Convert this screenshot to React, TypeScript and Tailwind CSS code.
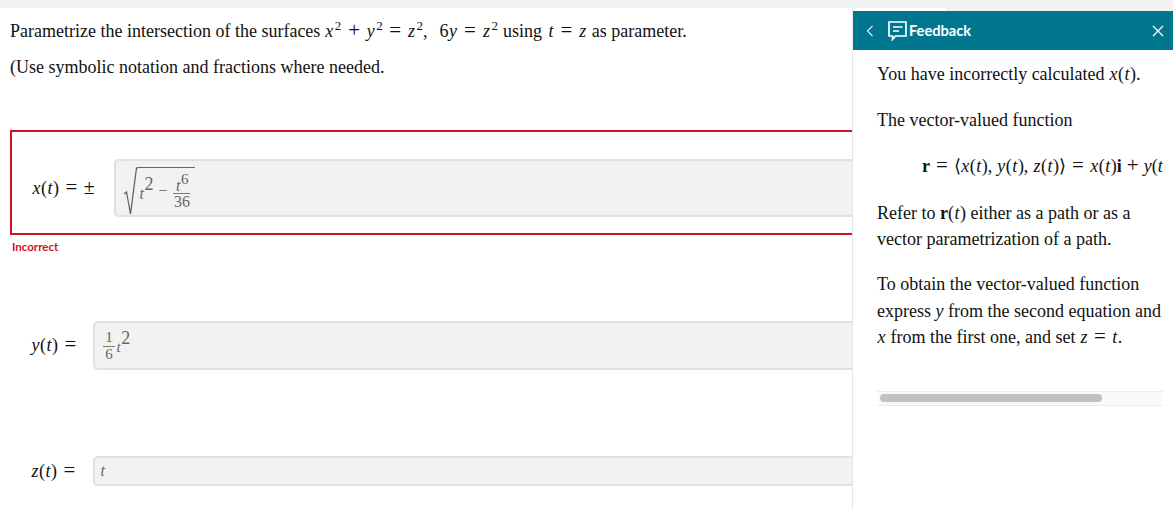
import React from "react";

const I = ({ children }: { children: React.ReactNode }) => <i className="italic px-[0.5px]">{children}</i>;
const Sup = ({ children }: { children: React.ReactNode }) => (
  <sup className="text-[13px] leading-none align-baseline relative top-[-7px] pl-[1px]">{children}</sup>
);
const Eq = () => <span className="mx-[6.5px] text-[21px] leading-none">=</span>;
const EqS = () => <span className="mx-[6px] text-[21px] leading-none">=</span>;
const Plus = () => <span className="ml-[7px] mr-[6px] text-[21px] leading-none">+</span>;

const Frac = ({ top, bottom, cls }: { top: React.ReactNode; bottom: React.ReactNode; cls: string }) => (
  <span className={`inline-flex flex-col items-center ${cls}`}>
    <span className="leading-[15px] pb-[1px]">{top}</span>
    <span className="leading-[15px] w-full text-center border-t border-[#777]">{bottom}</span>
  </span>
);

const MathInput = ({ cls, children }: { cls: string; children: React.ReactNode }) => (
  <div className={`flex-1 flex items-center bg-[#f2f2f2] border-2 border-r-0 border-[#e1e1e1] rounded-l-[5px] text-[#666] ${cls}`}>
    {children}
  </div>
);

export default function App() {
  return (
    <div className="w-[1173px] h-[509px] overflow-hidden bg-white flex flex-col font-['Liberation_Serif',serif] text-[18px] text-[#111]">
      <div className="h-2 bg-[#f2f2f2] shrink-0" />
      <div className="flex flex-1 min-h-0">
        <main className="w-[852px] shrink-0 flex flex-col pl-[10px] overflow-hidden">
          <p className="h-[24px] mt-[11px] leading-[24px] whitespace-nowrap">
            Parametrize the intersection of the surfaces{" "}
            <I>x</I><Sup>2</Sup><Plus /><I>y</I><Sup>2</Sup><Eq /><I>z</I><Sup>2</Sup>,
            <span className="ml-[12px]">6</span><I>y</I><Eq /><I>z</I><Sup>2</Sup>
            <span className="ml-[5px]">using</span><span className="ml-[6px]"><I>t</I></span><Eq /><I>z</I><span className="ml-[5px]">as parameter.</span>
          </p>
          <p className="h-[24px] mt-[12px] leading-[24px]">(Use symbolic notation and fractions where needed.</p>

          <section className="mt-[51px] h-[105px] border-2 border-r-0 border-[#d0121f] flex items-center pl-[20px] pt-[10px] shrink-0">
            <div className="w-[82px] shrink-0 whitespace-nowrap mt-[2px]"><I>x</I>(<I>t</I>)<Eq /><span className="text-[20px] leading-none">±</span></div>
            <MathInput cls="h-[58px] pl-[6px]">
              <svg width="16" height="48" viewBox="0 0 16 48" className="shrink-0 self-end">
                <path d="M2 27 L4.5 25 L8.5 47 L14.5 1 L16 1" fill="none" stroke="#666" strokeWidth="1.3" />
              </svg>
              <span className="border-t border-[#666] h-[48px] self-end flex items-center pr-[5px] pl-[1px] text-[16px]">
                <span className="relative top-[3px]"><I>t</I></span><span className="text-[18px] relative top-[-7px] leading-none">2</span>
                <span className="ml-[5px] mr-[6px]">−</span>
                <Frac cls="text-[16px] w-[17px] relative top-[1px]" top={<span className="relative top-[2px]"><I>t</I><span className="text-[15px] relative top-[-7px] leading-none">6</span></span>} bottom="36" />
              </span>
            </MathInput>
          </section>
          <div className="mt-[4px] h-[16px] leading-[16px] font-['Lato',sans-serif] font-bold text-[11.5px] text-[#d0121f] pl-[2px]">Incorrect</div>

          <div className="mt-[66px] flex items-center h-[49px] shrink-0">
            <div className="w-[83px] shrink-0 pl-[21px] whitespace-nowrap"><I>y</I>(<I>t</I>)<Eq /></div>
            <MathInput cls="h-[49px] pl-[8px]">
              <span className="flex items-center text-[15px] h-full">
                <Frac cls="w-[12px]" top="1" bottom="6" />
                <span className="ml-[1px] relative top-[2px]"><I>t</I></span>
                <span className="text-[18px] relative top-[-8px] leading-none">2</span>
              </span>
            </MathInput>
          </div>

          <div className="mt-[86px] flex items-center h-[30px] shrink-0">
            <div className="w-[83px] shrink-0 pl-[21px] whitespace-nowrap"><I>z</I>(<I>t</I>)<Eq /></div>
            <MathInput cls="h-[30px] pl-[5px] text-[16px]"><I>t</I></MathInput>
          </div>
        </main>

        <aside className="w-[321px] shrink-0 flex flex-col border-l border-[#e6e6e6]">
          <div className="h-[3px] flex shrink-0">
            <div className="w-[93px] bg-white" />
            <div className="flex-1 bg-[#f2f2f2]" />
          </div>
          <header className="h-[39px] bg-[#00778f] flex items-center text-white shrink-0">
            <svg width="8" height="12" viewBox="0 0 8 12" fill="none" stroke="#dfeff2" strokeWidth="1.1" className="ml-[13px]">
              <path d="M6.5 1 L1.5 6 L6.5 11" />
            </svg>
            <svg width="19" height="20" viewBox="0 0 19 20" fill="none" stroke="white" strokeWidth="1.7" className="ml-[14px] mt-[1px]">
              <path d="M1 1 H18 V15 H7.5 L4.5 18.5 V15 H1 Z" />
              <path d="M5 6 H14.5 M5 10 H11" />
            </svg>
            <span className="ml-[2px] font-['Lato',sans-serif] font-bold text-[14.6px]">Feedback</span>
            <svg width="12" height="12" viewBox="0 0 12 12" fill="none" stroke="white" strokeWidth="1.2" className="ml-auto mr-[9px]">
              <path d="M1 1 L11 11 M11 1 L1 11" />
            </svg>
          </header>
          <div className="pl-[24px] pr-[10px] flex flex-col">
            <p className="mt-[11px] leading-[26px] whitespace-nowrap">You have incorrectly calculated <I>x</I>(<I>t</I>).</p>
            <p className="mt-[20px] leading-[26px]">The vector-valued function</p>
            <p className="mt-[20px] h-[26px] leading-[26px] overflow-hidden whitespace-nowrap pl-[45px]">
              <b>r</b><EqS /><span>⟨</span><I>x</I>(<I>t</I>), <I>y</I>(<I>t</I>), <I>z</I>(<I>t</I>)<span>⟩</span><EqS /><I>x</I>(<I>t</I>)<b>i</b><span className="mx-[5px] text-[21px] leading-none">+</span><i>y</i>(<i>t</i>)
            </p>
            <p className="mt-[21px] leading-[26px]">Refer to <b>r</b>(<I>t</I>) either as a path or as a<br />vector parametrization of a path.</p>
            <p className="mt-[19px] leading-[26.5px] whitespace-nowrap">
              To obtain the vector-valued function<br />
              express <i>y</i> from the second equation and<br />
              <I>x</I> from the first one, and set <I>z</I><EqS /><I>t</I>.
            </p>
            <div className="mt-[40px] h-[15px] bg-[#fafafa] border-y border-[#ececec] flex items-center px-[3px]">
              <div className="w-[222px] h-[8px] rounded-full bg-[#c1c1c1]" />
            </div>
          </div>
        </aside>
      </div>
    </div>
  );
}
